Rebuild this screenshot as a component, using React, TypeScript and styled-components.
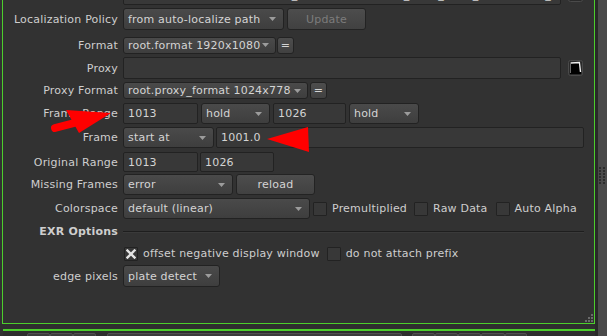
import React from 'react';
import styled, { createGlobalStyle } from 'styled-components';

const Global = createGlobalStyle`
  html, body { margin: 0; padding: 0; background: #323232; overflow: hidden; }
  body { font-family: "DejaVu Sans", Verdana, sans-serif; font-size: 11px; letter-spacing: 0.2px; color: #cecece; }
  * { box-sizing: border-box; }
`;

const Screen = styled.div`
  position: relative;
  width: 607px;
  height: 336px;
  overflow: hidden;
  display: flex;
  background: #323232;
`;

const MainCol = styled.div`
  width: 595px;
  display: flex;
  flex-direction: column;
`;

const Panel = styled.div`
  position: relative;
  margin-left: 2px;
  width: 593px;
  height: 324px;
  flex-shrink: 0;
  border: 1px solid #4ccf2c;
  border-top: none;
  overflow: hidden;
  background: #323232;
`;

const Rows = styled.div`
  display: flex;
  flex-direction: column;
  margin-top: -18px;
`;

const Row = styled.div<{ $h: number }>`
  display: flex;
  align-items: center;
  height: ${(p) => p.$h}px;
  flex-shrink: 0;
`;

const Label = styled.div<{ $bold?: boolean }>`
  width: 115px;
  margin-right: 5px;
  text-align: right;
  white-space: nowrap;
  color: #cecece;
  font-weight: ${(p) => (p.$bold ? 'bold' : 'normal')};
  flex-shrink: 0;
`;

const Field = styled.div<{ $w: number; $hh?: number; $ml?: number }>`
  width: ${(p) => p.$w}px;
  height: ${(p) => p.$hh ?? 22}px;
  margin-left: ${(p) => p.$ml ?? 0}px;
  flex-shrink: 0;
  background: #383838;
  border: 1px solid #222222;
  border-radius: 2px;
  padding: 0 4px;
  display: flex;
  align-items: center;
  color: #d4d4d4;
  white-space: nowrap;
  overflow: hidden;
`;

const Drop = styled.div<{ $w: number; $hh?: number; $ml?: number; $pr?: number }>`
  width: ${(p) => p.$w}px;
  height: ${(p) => p.$hh ?? 21}px;
  margin-left: ${(p) => p.$ml ?? 0}px;
  flex-shrink: 0;
  background: linear-gradient(#4a4a4a, #3e3e3e);
  border: 1px solid #222222;
  border-radius: 3px;
  padding: 0 ${(p) => p.$pr ?? 7}px 0 4px;
  display: flex;
  align-items: center;
  justify-content: space-between;
  color: #d4d4d4;
  white-space: nowrap;
  overflow: hidden;
`;

const Button = styled.div<{ $w: number; $hh?: number; $ml?: number; $disabled?: boolean }>`
  width: ${(p) => p.$w}px;
  height: ${(p) => p.$hh ?? 22}px;
  margin-left: ${(p) => p.$ml ?? 0}px;
  flex-shrink: 0;
  background: linear-gradient(#4d4d4d, #414141);
  border: 1px solid #232323;
  border-radius: 3px;
  display: flex;
  align-items: center;
  justify-content: center;
  color: ${(p) => (p.$disabled ? '#7c7c7c' : '#d4d4d4')};
`;

const Arrow = () => (
  <svg width="7" height="4" viewBox="0 0 7 4">
    <polygon points="0,0 7,0 3.5,4" fill="#9c9c9c" />
  </svg>
);

const Box = styled.div<{ $ml?: number }>`
  width: 14px;
  height: 14px;
  margin-left: ${(p) => p.$ml ?? 0}px;
  margin-right: 5px;
  flex-shrink: 0;
  background: #383838;
  border: 1px solid #222222;
  border-radius: 1px;
  display: flex;
  align-items: center;
  justify-content: center;
`;

const CheckText = styled.span<{ $mr?: number }>`
  color: #cecece;
  white-space: nowrap;
  margin-right: ${(p) => p.$mr ?? 0}px;
`;

const Divider = styled.div`
  width: 461px;
  height: 1px;
  background: #1e1e1e;
  box-shadow: 0 1px 0 #3a3a3a;
`;

const BrowseIcon = styled.div<{ $ml?: number }>`
  width: 15px;
  height: 16px;
  margin-left: ${(p) => p.$ml ?? 0}px;
  flex-shrink: 0;
  display: flex;
`;

const Browse = ({ ml }: { ml: number }) => (
  <BrowseIcon $ml={ml}>
    <svg width="15" height="16" viewBox="0 0 15 16">
      <rect x="0.5" y="0.5" width="14" height="15" rx="2" fill="#2a2a2a" stroke="#4a4a4a" />
      <rect x="2" y="2" width="11" height="12" fill="#000" />
      <polyline points="2.5,3 11.5,2.5 12.5,12" fill="none" stroke="#f0f0f0" strokeWidth="1.4" />
      <line x1="2.5" y1="3" x2="2.5" y2="13" stroke="#6a6a6a" strokeWidth="1" />
    </svg>
  </BrowseIcon>
);

const Grip = styled.div`
  position: absolute;
  right: 0;
  bottom: 0;
  width: 10px;
  height: 10px;
  display: flex;
`;

const Below = styled.div`
  height: 5px;
  flex-shrink: 0;
  background: #2f2f2f;
`;

const NextPanel = styled.div`
  margin-left: 3px;
  width: 592px;
  flex: 1;
  border-top: 2px solid #4ccf2c;
  background: #2e2e2e;
  display: flex;
  align-items: flex-start;
  padding-top: 2px;
  overflow: hidden;
`;

const TabGroup = styled.div<{ $ml: number }>`
  display: flex;
  margin-left: ${(p) => p.$ml}px;
`;

const Tab = styled.div<{ $w: number }>`
  width: ${(p) => p.$w}px;
  height: 8px;
  background: #3c3c3c;
  border: 1px solid #505050;
  border-radius: 2px 2px 0 0;
  flex-shrink: 0;
`;

const SideStrip = styled.div`
  width: 12px;
  display: flex;
  border-left: 3px solid #292929;
  background: #4a4a4a;
  flex-direction: column;
  align-items: center;
  padding-top: 167px;
`;

const Overlay = styled.svg`
  position: absolute;
  left: 0;
  top: 0;
  pointer-events: none;
`;

export default function App() {
  return (
    <Screen>
      <Global />
      <MainCol>
        <Panel>
          <Rows>
            <Row $h={24}>
              <Label>File</Label>
              <Field $w={438}>/mnt/proj/shots/sq010/sq010_0020/plates/sq010_0020_bg01_v001/sq010_0020_bg01_v001.####.exr</Field>
              <Browse ml={7} />
            </Row>
            <Row $h={26}>
              <Label>Localization Policy</Label>
              <Drop $w={161} $hh={22}>from auto-localize path<Arrow /></Drop>
              <Button $w={79} $ml={3} $disabled>Update</Button>
            </Row>
            <Row $h={26}>
              <Label>Format</Label>
              <Drop $w={153} $hh={17} $pr={6}>root.format 1920x1080<Arrow /></Drop>
              <Button $w={17} $hh={17} $ml={1}>=</Button>
            </Row>
            <Row $h={20}>
              <Label>Proxy</Label>
              <Field $w={438}></Field>
              <Browse ml={7} />
            </Row>
            <Row $h={25}>
              <Label>Proxy Format</Label>
              <Drop $w={185} $hh={17} $pr={6}>root.proxy_format 1024x778<Arrow /></Drop>
              <Button $w={17} $hh={17} $ml={2}>=</Button>
            </Row>
            <Row $h={21}>
              <Label>Frame Range</Label>
              <Field $w={75} $hh={21}>1013</Field>
              <Drop $w={69} $ml={3}>hold<Arrow /></Drop>
              <Field $w={73} $hh={21} $ml={3}>1026</Field>
              <Drop $w={70} $ml={3}>hold<Arrow /></Drop>
            </Row>
            <Row $h={27}>
              <Label>Frame</Label>
              <Drop $w={91}>start at<Arrow /></Drop>
              <Field $w={368} $hh={21} $ml={2}>1001.0</Field>
            </Row>
            <Row $h={22}>
              <Label>Original Range</Label>
              <Field $w={75} $hh={20}>1013</Field>
              <Field $w={74} $hh={20} $ml={2}>1026</Field>
            </Row>
            <Row $h={23}>
              <Label>Missing Frames</Label>
              <Drop $w={110}>error<Arrow /></Drop>
              <Button $w={79} $hh={21} $ml={3}>reload</Button>
            </Row>
            <Row $h={25}>
              <Label>Colorspace</Label>
              <Drop $w={187}>default (linear)<Arrow /></Drop>
              <Box $ml={3} />
              <CheckText $mr={7}>Premultiplied</CheckText>
              <Box />
              <CheckText $mr={8}>Raw Data</CheckText>
              <Box />
              <CheckText>Auto Alpha</CheckText>
            </Row>
            <Row $h={20}>
              <Label $bold>EXR Options</Label>
              <Divider />
            </Row>
            <Row $h={25}>
              <Label />
              <Box $ml={1}>
                <svg width="10" height="10" viewBox="0 0 10 10">
                  <line x1="1.5" y1="1.5" x2="8.5" y2="8.5" stroke="#e4e4e4" strokeWidth="2.4" strokeLinecap="square" />
                  <line x1="8.5" y1="1.5" x2="1.5" y2="8.5" stroke="#e4e4e4" strokeWidth="2.4" strokeLinecap="square" />
                </svg>
              </Box>
              <CheckText $mr={7}>offset negative display window</CheckText>
              <Box />
              <CheckText>do not attach prefix</CheckText>
            </Row>
            <Row $h={20}>
              <Label>edge pixels</Label>
              <Drop $w={97} $hh={22}>plate detect<Arrow /></Drop>
            </Row>
          </Rows>
          <Grip>
            <svg width="10" height="10" viewBox="0 0 10 10">
              {[[7, 1], [7, 4], [4, 4], [7, 7], [4, 7], [1, 7]].map(([x, y], i) => (
                <rect key={i} x={x} y={y} width="2" height="2" fill="#6a6a6a" />
              ))}
            </svg>
          </Grip>
        </Panel>
        <Below />
        <NextPanel>
          <TabGroup $ml={24}>
            <Tab $w={23} />
            <Tab $w={23} />
            <Tab $w={23} />
          </TabGroup>
          <TabGroup $ml={11}>
            <Tab $w={295} />
          </TabGroup>
          <TabGroup $ml={10}>
            <Tab $w={23} />
            <Tab $w={23} />
            <Tab $w={23} />
            <Tab $w={24} />
            <Tab $w={22} />
          </TabGroup>
        </NextPanel>
      </MainCol>
      <SideStrip>
        <svg width="7" height="18" viewBox="0 0 7 18">
          {[0, 3, 6, 9, 12, 15].map((y) => (
            <g key={y}>
              <rect x="0" y={y} width="2" height="2" fill="#2c2c2c" />
              <rect x="4" y={y} width="2" height="2" fill="#2c2c2c" />
            </g>
          ))}
        </svg>
      </SideStrip>
      <Overlay width="607" height="336" viewBox="0 0 607 336">
        <line x1="55" y1="128" x2="82" y2="121" stroke="#ff0000" strokeWidth="8" strokeLinecap="round" />
        <polygon points="66,110 111,113 79,133" fill="#ff0000" />
        <polygon points="267,139 308,127 309,152" fill="#ff0000" />
      </Overlay>
    </Screen>
  );
}
